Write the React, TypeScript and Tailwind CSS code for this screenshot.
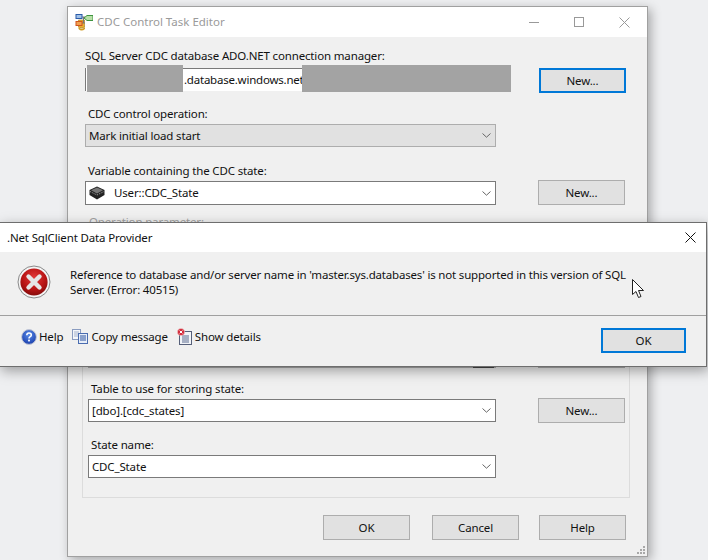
import type { ReactNode } from "react"

const font = "font-['Noto_Sans','Open_Sans',sans-serif] text-[11.5px] tracking-[-0.15px]"

function Chevron() {
  return (
    <svg width="9" height="5" viewBox="0 0 9 5" className="shrink-0">
      <path d="M0.5 0.5 L4.5 4.2 L8.5 0.5" fill="none" stroke="#666" strokeWidth="1" />
    </svg>
  )
}

function Combo({ children, className }: { children: ReactNode; className: string }) {
  return (
    <div className={`flex items-center justify-between border pl-[3px] pr-[2px] ${className}`}>
      <div className="flex items-center text-[#111]">{children}</div>
      <div className="flex w-[14px] justify-center">
        <Chevron />
      </div>
    </div>
  )
}

function Btn({ label, className = "" }: { label: string; className?: string }) {
  return (
    <div className={`flex w-[87px] items-center justify-center bg-[#e1e1e1] text-[#111] ${className || "h-[25px] border border-[#adadad]"}`}>
      {label}
    </div>
  )
}

function TaskIcon() {
  return (
    <svg width="18" height="17" viewBox="0 0 18 17">
      <path d="M3.5 6 H9.5 V13 Q7 15 3.5 13 Z" fill="#e8b030" stroke="#a87818" strokeWidth="0.6" />
      <path d="M3.5 13 Q6.5 16.5 10 13 V15 Q6.5 18 3.5 15 Z" fill="#d09a20" />
      <path d="M7 3 h3 M7 9 h3 M8.5 3 v6" stroke="#777" fill="none" />
      <rect x="1" y="0.5" width="6" height="4" fill="#9fc0e8" stroke="#2a5aa8" />
      <rect x="1" y="7.5" width="6" height="4" fill="#f0a050" stroke="#d0541c" />
      <path d="M9 4 L12 1.5 H18 V6.5 H12 Z" fill="#b8e0a8" stroke="#3f9440" />
    </svg>
  )
}

function VarIcon() {
  return (
    <svg width="16" height="14" viewBox="0 0 16 14">
      <path d="M8 0.5 L15.5 4 V9 L8 13.5 L0.5 9 V4 Z" fill="#222" />
      <path d="M8 1.5 L14 4.3 L8 7.5 L2 4.3 Z" fill="#777" />
      <path d="M1 5.5 L8 9 L15 5.5" fill="none" stroke="#ddd" strokeWidth="0.7" strokeDasharray="1 1" />
    </svg>
  )
}

function ErrorIcon() {
  return (
    <svg width="34" height="34" viewBox="0 0 34 34">
      <defs>
        <radialGradient id="errRed" cx="50%" cy="35%" r="70%">
          <stop offset="0%" stopColor="#e23a3a" />
          <stop offset="60%" stopColor="#b81414" />
          <stop offset="100%" stopColor="#7c0a0a" />
        </radialGradient>
      </defs>
      <circle cx="17" cy="17" r="16" fill="#f4f4f4" stroke="#8a8a8a" strokeWidth="1" />
      <circle cx="17" cy="17" r="13.6" fill="url(#errRed)" />
      <path d="M11.5 11.5 L22.5 22.5 M22.5 11.5 L11.5 22.5" stroke="#e6e6e6" strokeWidth="4.4" strokeLinecap="round" />
    </svg>
  )
}

function HelpIcon() {
  return (
    <svg width="16" height="16" viewBox="0 0 16 16">
      <defs>
        <radialGradient id="helpBlue" cx="50%" cy="35%" r="70%">
          <stop offset="0%" stopColor="#5a8ce8" />
          <stop offset="100%" stopColor="#1438a8" />
        </radialGradient>
      </defs>
      <circle cx="8" cy="8" r="7.4" fill="url(#helpBlue)" stroke="#c4c8d4" />
      <path d="M5.8 6.2 Q5.9 4 8 4 Q10.3 4 10.3 6 Q10.3 7.2 8.9 7.9 Q8 8.4 8 9.6" fill="none" stroke="#fff" strokeWidth="1.6" />
      <rect x="7.1" y="10.6" width="1.8" height="1.8" fill="#fff" />
    </svg>
  )
}

function CopyIcon() {
  return (
    <svg width="16" height="15" viewBox="0 0 16 15">
      <rect x="0.5" y="0.5" width="8" height="10" fill="#f4f6fa" stroke="#8a9cc0" />
      <path d="M2 3 h5 M2 5 h5 M2 7 h5" stroke="#a4b2cc" />
      <rect x="6.5" y="4.5" width="9" height="10" fill="#e6edf8" stroke="#4a6cb0" />
      <path d="M8 7 h6 M8 9 h6 M8 11 h6" stroke="#2f55a0" />
    </svg>
  )
}

function DetailsIcon() {
  return (
    <svg width="15" height="17" viewBox="0 0 15 17">
      <rect x="2.5" y="3.5" width="12" height="13" fill="#f2f4f8" stroke="#56607a" />
      <path d="M5 8 h7 M5 10 h7 M5 12 h7 M5 14 h7" stroke="#5c6c90" />
      <circle cx="4" cy="4" r="3.6" fill="#d42a3a" stroke="#f0d0d0" strokeWidth="0.6" />
      <path d="M2.6 2.6 L5.4 5.4 M5.4 2.6 L2.6 5.4" stroke="#fff" strokeWidth="1" />
    </svg>
  )
}

export default function App() {
  return (
    <div className={`relative h-[560px] w-[708px] overflow-hidden bg-[#eeeff1] pt-[6px] pl-[67px] ${font}`}>
      {/* Task editor window */}
      <div className="flex h-[551px] w-[581px] flex-col border border-[#a0a0a0] bg-[#f0f0f0] shadow-[3px_3px_10px_rgba(0,0,0,0.3)]">
        <div className="flex h-[30px] shrink-0 items-center bg-white pl-[7px]">
          <TaskIcon />
          <span className="ml-[4px] tracking-normal text-[#9a9a9a]">CDC Control Task Editor</span>
          <div className="ml-auto flex items-center">
            <div className="h-px w-[10px] bg-[#999]" />
            <div className="ml-[35px] h-[10px] w-[10px] border border-[#999]" />
            <svg width="11" height="11" viewBox="0 0 11 11" className="mr-[17px] ml-[35px]">
              <path d="M0.5 0.5 L10.5 10.5 M10.5 0.5 L0.5 10.5" stroke="#999" />
            </svg>
          </div>
        </div>

        <div className="relative flex flex-1 flex-col pt-[11px]">
          <div className="ml-[17px] h-[17px] leading-[16px] text-[#111]">SQL Server CDC database ADO.NET connection manager:</div>
          <div className="ml-[17px] flex">
            <div className="flex h-[27px] w-[426px]">
              <div className="mt-[3px] h-[23px] w-[2px] border-l border-[#7a7a7a] bg-white" />
              <div className="w-[96px] bg-[#a3a3a3]" />
              <div className="mt-[3px] flex h-[23px] w-[119px] items-center border-t border-[#7a7a7a] bg-white pl-[1px] tracking-[-0.22px] text-[#111]">.database.windows.net</div>
              <div className="w-[209px] bg-[#a3a3a3]" />
            </div>
            <Btn label="New..." className="mt-[3px] ml-[28px] h-[25px] border-2 border-[#0078d7]" />
          </div>

          <div className="mt-[13px] ml-[20px] h-[16px] leading-[16px] text-[#111]">CDC control operation:</div>
          <Combo className="mt-[2px] ml-[17px] h-[23px] w-[411px] border-[#adadad] bg-[#e1e1e1]">Mark initial load start</Combo>

          <div className="mt-[16px] ml-[20px] h-[16px] leading-[16px] text-[#111]">Variable containing the CDC state:</div>
          <div className="ml-[17px] flex items-start">
            <Combo className="mt-[2px] h-[24px] w-[411px] border-[#7a7a7a] bg-white">
              <VarIcon />
              <span className="ml-[9px]">User::CDC_State</span>
            </Combo>
            <div className="mt-[1px] ml-[42px]">
              <Btn label="New..." />
            </div>
          </div>

          {/* Group box, top part is hidden behind the error dialog */}
          <div className="relative mt-[17px] ml-[14px] h-[276px] w-[548px] border border-[#dcdcdc] pt-[120px] pl-[5px]">
            <span className="absolute top-[-10px] left-[5px] bg-[#f0f0f0] px-px text-[#a0a0a0]">Operation parameter:</span>
            <div className="relative flex items-start">
              <Combo className="h-[25px] w-[408px] border-[#adadad] bg-white"> </Combo>
              <div className="absolute bottom-0 left-[385px] h-px w-[21px] bg-[#444]" />
              <div className="ml-[42px]">
                <Btn label="New..." />
              </div>
            </div>
            <div className="mt-[13px] ml-[3px] h-[16px] leading-[16px] text-[#111]">Table to use for storing state:</div>
            <div className="flex items-start">
              <Combo className="mt-[2px] h-[23px] w-[408px] border-[#7a7a7a] bg-white">[dbo].[cdc_states]</Combo>
              <div className="mt-[1px] ml-[42px]">
                <Btn label="New..." />
              </div>
            </div>
            <div className="mt-[14px] ml-[3px] h-[16px] leading-[16px] text-[#111]">State name:</div>
            <Combo className="mt-[2px] h-[23px] w-[408px] border-[#7a7a7a] bg-white">CDC_State</Combo>
          </div>

          <div className="mt-[17px] ml-[255px] flex">
            <Btn label="OK" />
            <div className="ml-[22px]">
              <Btn label="Cancel" />
            </div>
            <div className="ml-[20px]">
              <Btn label="Help" />
            </div>
          </div>

          <svg width="10" height="10" viewBox="0 0 10 10" className="absolute right-[1px] bottom-[1px]" fill="#a8a8a8">
            <rect x="7" y="1" width="2" height="2" />
            <rect x="4" y="4" width="2" height="2" />
            <rect x="7" y="4" width="2" height="2" />
            <rect x="1" y="7" width="2" height="2" />
            <rect x="4" y="7" width="2" height="2" />
            <rect x="7" y="7" width="2" height="2" />
          </svg>
        </div>
      </div>

      {/* Error dialog */}
      <div className="absolute top-[222px] left-[-1px] flex h-[145px] w-[708px] flex-col border border-[#6e6e6e] bg-[#f0f0f0] shadow-[2px_4px_12px_rgba(0,0,0,0.35)]">
        <div className="flex h-[29px] shrink-0 items-center bg-white pl-[7px] text-[#111]">
          <span>.Net SqlClient Data Provider</span>
          <svg width="11" height="11" viewBox="0 0 11 11" className="mr-[10px] ml-auto">
            <path d="M0.5 0.5 L10.5 10.5 M10.5 0.5 L0.5 10.5" stroke="#111" />
          </svg>
        </div>
        <div className="flex h-[64px] shrink-0 border-b border-[#a0a0a0] pt-[15px] pl-[17px]">
          <div className="mt-[-2px] h-[34px]">
            <ErrorIcon />
          </div>
          <div className="ml-[19px] w-[590px] leading-[15px] tracking-[-0.18px] text-[#111]">
            Reference to database and/or server name in 'master.sys.databases' is not supported in this version of SQL
            <br />
            Server. (Error: 40515)
          </div>
        </div>
        <div className="flex flex-1 items-start pt-[12px] pl-[21px] text-[#111]">
          <div className="flex items-center">
            <HelpIcon />
            <span className="ml-[2px]">Help</span>
            <span className="ml-[9px]">
              <CopyIcon />
            </span>
            <span className="ml-[3px]">Copy message</span>
            <span className="ml-[9px]">
              <DetailsIcon />
            </span>
            <span className="ml-[3px]">Show details</span>
          </div>
          <div className="mr-[20px] ml-auto">
            <Btn label="OK" className="!w-[85px] h-[25px] border-2 border-[#0078d7]" />
          </div>
        </div>
      </div>

      {/* Mouse pointer */}
      <svg width="13" height="20" viewBox="0 0 13 20" className="absolute top-[279px] left-[632px]">
        <path d="M0.5 0.5 V15.5 L4 12.5 L6.5 18.5 L9 17.5 L6.5 11.5 H11.5 Z" fill="#fff" stroke="#222" strokeWidth="1" />
      </svg>
    </div>
  )
}
